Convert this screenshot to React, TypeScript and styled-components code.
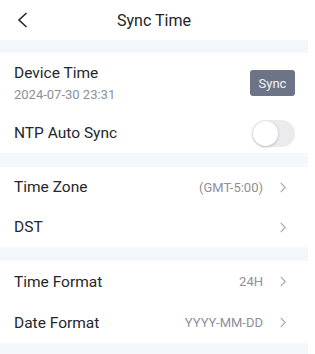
import React, { useState } from "react";
import styled, { createGlobalStyle } from "styled-components";

const GlobalStyle = createGlobalStyle`
  html, body {
    margin: 0;
    padding: 0;
    background: #ffffff;
  }
  body {
    font-family: Roboto, "Noto Sans", "Liberation Sans", sans-serif;
    -webkit-font-smoothing: antialiased;
  }
`;

const Page = styled.div`
  width: 308px;
  height: 354px;
  background: #ffffff;
  display: flex;
  flex-direction: column;
  overflow: hidden;
`;

const Header = styled.header`
  height: 40px;
  display: grid;
  grid-template-columns: 40px 1fr 40px;
  align-items: center;
`;

const BackButton = styled.button`
  border: none;
  background: none;
  padding: 0 0 0 17px;
  height: 40px;
  display: flex;
  align-items: center;
  cursor: pointer;
`;

const Title = styled.h1`
  margin: 0;
  text-align: center;
  font-size: 16px;
  font-weight: 400;
  color: #222428;
`;

const Gap = styled.div<{ $h: number }>`
  height: ${(p) => p.$h}px;
  background: #f4f7fc;
  flex-shrink: 0;
`;

const Row = styled.div<{ $h?: number }>`
  height: ${(p) => p.$h ?? 40}px;
  display: flex;
  align-items: center;
  padding: 0 13px 0 14px;
  flex-shrink: 0;
`;

const LabelBlock = styled.div`
  flex: 1;
  display: flex;
  flex-direction: column;
  gap: 3px;
`;

const Label = styled.span`
  font-size: 15.5px;
  line-height: 20px;
  color: #25272b;
`;

const SubLabel = styled.span`
  font-size: 13px;
  line-height: 18px;
  color: #8b909a;
`;

const Value = styled.span`
  font-size: 13px;
  color: #8b909a;
  margin-right: 17px;
`;

const SyncButton = styled.button`
  width: 45px;
  height: 26px;
  border: none;
  border-radius: 3px;
  background: #6d7487;
  color: #f3f4f7;
  font-family: inherit;
  font-size: 13px;
  padding: 0;
  cursor: pointer;
`;

const Toggle = styled.button<{ $on: boolean }>`
  position: relative;
  width: 43px;
  height: 27px;
  border: none;
  border-radius: 14px;
  padding: 0;
  background: ${(p) => (p.$on ? "#4a7cf6" : "#ebebed")};
  cursor: pointer;
`;

const Knob = styled.span<{ $on: boolean }>`
  position: absolute;
  top: 1px;
  left: ${(p) => (p.$on ? "17px" : "1px")};
  width: 25px;
  height: 25px;
  border-radius: 50%;
  background: #ffffff;
  box-shadow: 0 1px 3px rgba(0, 0, 0, 0.22);
`;

const ChevronWrap = styled.span`
  width: 8px;
  margin-right: 7px;
  display: flex;
  align-items: center;
`;

function Chevron() {
  return (
    <ChevronWrap>
      <svg width="6" height="11" viewBox="0 0 6 11">
        <polyline points="0.8,0.8 5.2,5.5 0.8,10.2" fill="none" stroke="#a6a9b0" strokeWidth="1.2" />
      </svg>
    </ChevronWrap>
  );
}

function NavRow({ label, value, h }: { label: string; value?: string; h?: number }) {
  return (
    <Row $h={h}>
      <LabelBlock>
        <Label>{label}</Label>
      </LabelBlock>
      {value && <Value>{value}</Value>}
      <Chevron />
    </Row>
  );
}

export default function App() {
  const [ntp, setNtp] = useState(false);

  return (
    <>
      <GlobalStyle />
      <Page>
        <Header>
          <BackButton aria-label="Back">
            <svg width="11" height="16" viewBox="0 0 11 16">
              <polyline points="9.5,1 2,8 9.5,15" fill="none" stroke="#26282c" strokeWidth="1.6" />
            </svg>
          </BackButton>
          <Title>Sync Time</Title>
          <span />
        </Header>
        <Gap $h={13} />
        <Row $h={60}>
          <LabelBlock>
            <Label>Device Time</Label>
            <SubLabel>2024-07-30 23:31</SubLabel>
          </LabelBlock>
          <SyncButton>Sync</SyncButton>
        </Row>
        <Row>
          <LabelBlock>
            <Label>NTP Auto Sync</Label>
          </LabelBlock>
          <Toggle $on={ntp} onClick={() => setNtp(!ntp)} aria-label="NTP Auto Sync">
            <Knob $on={ntp} />
          </Toggle>
        </Row>
        <Gap $h={14} />
        <NavRow label="Time Zone" value="(GMT-5:00)" />
        <NavRow label="DST" />
        <Gap $h={14} />
        <NavRow label="Time Format" value="24H" h={41} />
        <NavRow label="Date Format" value="YYYY-MM-DD" h={41} />
        <Gap $h={12} />
      </Page>
    </>
  );
}
